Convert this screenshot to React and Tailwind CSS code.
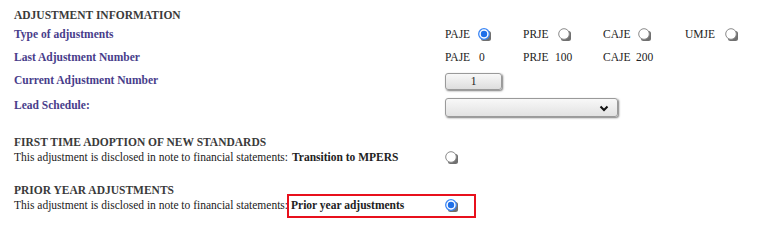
import React from "react";

function Radio({ checked }) {
  return (
    <svg width="14" height="14" viewBox="0 0 14 14" className="shrink-0">
      <defs>
        <filter id="rb" x="-30%" y="-30%" width="160%" height="160%">
          <feGaussianBlur stdDeviation="0.6" />
        </filter>
      </defs>
      <rect x="3" y="3" width="10" height="10" rx="2.5" fill="#6f6f6f" filter="url(#rb)" />
      {checked ? (
        <>
          <circle cx="6" cy="6" r="5.3" fill="#ffffff" stroke="#3a86f5" strokeWidth="1.3" />
          <circle cx="6" cy="6" r="3.2" fill="#1f6fe8" />
        </>
      ) : (
        <circle cx="6" cy="6" r="5.3" fill="#ffffff" stroke="#8a8a8a" strokeWidth="1" />
      )}
    </svg>
  );
}

const label = "text-[#483D8B] font-bold";

export default function App() {
  return (
    <div
      className="w-[768px] h-[227px] bg-white text-[11.5px] text-[#222] pl-[14px] pt-[8px] overflow-hidden"
      style={{ fontFamily: '"Liberation Serif", "Times New Roman", serif' }}
    >
      <div className="h-[15px] leading-[15px] font-bold text-[#3a3a3a]">ADJUSTMENT INFORMATION</div>

      <div className="flex h-[23px] items-center">
        <div className={`w-[431px] ${label}`}>Type of adjustments</div>
        <div className="flex items-center">
          <div className="flex items-center w-[78px]">
            <span className="w-[33px]">PAJE</span>
            <Radio checked />
          </div>
          <div className="flex items-center w-[80px]">
            <span className="w-[35px]">PRJE</span>
            <Radio />
          </div>
          <div className="flex items-center w-[82px]">
            <span className="w-[35px]">CAJE</span>
            <Radio />
          </div>
          <div className="flex items-center">
            <span className="w-[40px]">UMJE</span>
            <Radio />
          </div>
        </div>
      </div>

      <div className="flex h-[23px] items-center">
        <div className={`w-[431px] ${label}`}>Last Adjustment Number</div>
        <div className="flex items-center">
          <div className="w-[78px] flex">
            <span className="w-[34px]">PAJE</span>
            <span>0</span>
          </div>
          <div className="w-[80px] flex">
            <span className="w-[32px]">PRJE</span>
            <span>100</span>
          </div>
          <div className="flex">
            <span className="w-[33px]">CAJE</span>
            <span>200</span>
          </div>
        </div>
      </div>

      <div className="flex h-[23px] items-center">
        <div className={`w-[431px] ${label}`}>Current Adjustment Number</div>
        <button className="w-[57px] h-[17px] rounded-[3px] border border-[#9a9a9a] bg-gradient-to-b from-[#f8f8f8] to-[#dedede] shadow-[1px_1px_2px_#7a7a7a] text-[11.5px] leading-[15px] text-[#222] mt-[2px]">
          1
        </button>
      </div>

      <div className="flex h-[24px] items-start">
        <div className={`w-[431px] pt-[6px] leading-[15px] ${label}`}>Lead Schedule:</div>
        <div className="relative w-[173px] h-[19px] rounded-[3px] border border-[#9a9a9a] bg-gradient-to-b from-[#f8f8f8] to-[#e2e2e2] shadow-[1px_1px_2px_#7a7a7a] mt-[6px]">
          <svg width="10" height="7" viewBox="0 0 10 7" className="absolute right-[8px] top-[6px]">
            <path d="M1.5 1.5 L5 5 L8.5 1.5" fill="none" stroke="#111" strokeWidth="2" />
          </svg>
        </div>
      </div>

      <div className="mt-[19px] h-[15px] leading-[15px] font-bold text-[#3a3a3a]">FIRST TIME ADOPTION OF NEW STANDARDS</div>
      <div className="flex items-center h-[15px] leading-[15px]">
        <span className="w-[273px] whitespace-nowrap">This adjustment is disclosed in note to financial statements:</span>
        <div className="flex items-center border-2 border-transparent pl-[3px] h-[24px] shrink-0">
          <span className="w-[153px] font-bold">Transition to MPERS</span>
          <Radio />
        </div>
      </div>

      <div className="mt-[18px] h-[15px] leading-[15px] font-bold text-[#3a3a3a]">PRIOR YEAR ADJUSTMENTS</div>
      <div className="flex items-center h-[15px] leading-[15px]">
        <span className="w-[273px] whitespace-nowrap">This adjustment is disclosed in note to financial statements:</span>
        <div className="flex items-center border-2 border-[#e8101c] pl-[2px] pr-[15px] h-[24px] shrink-0">
          <span className="w-[154px] font-bold">Prior year adjustments</span>
          <Radio checked />
        </div>
      </div>
    </div>
  );
}
